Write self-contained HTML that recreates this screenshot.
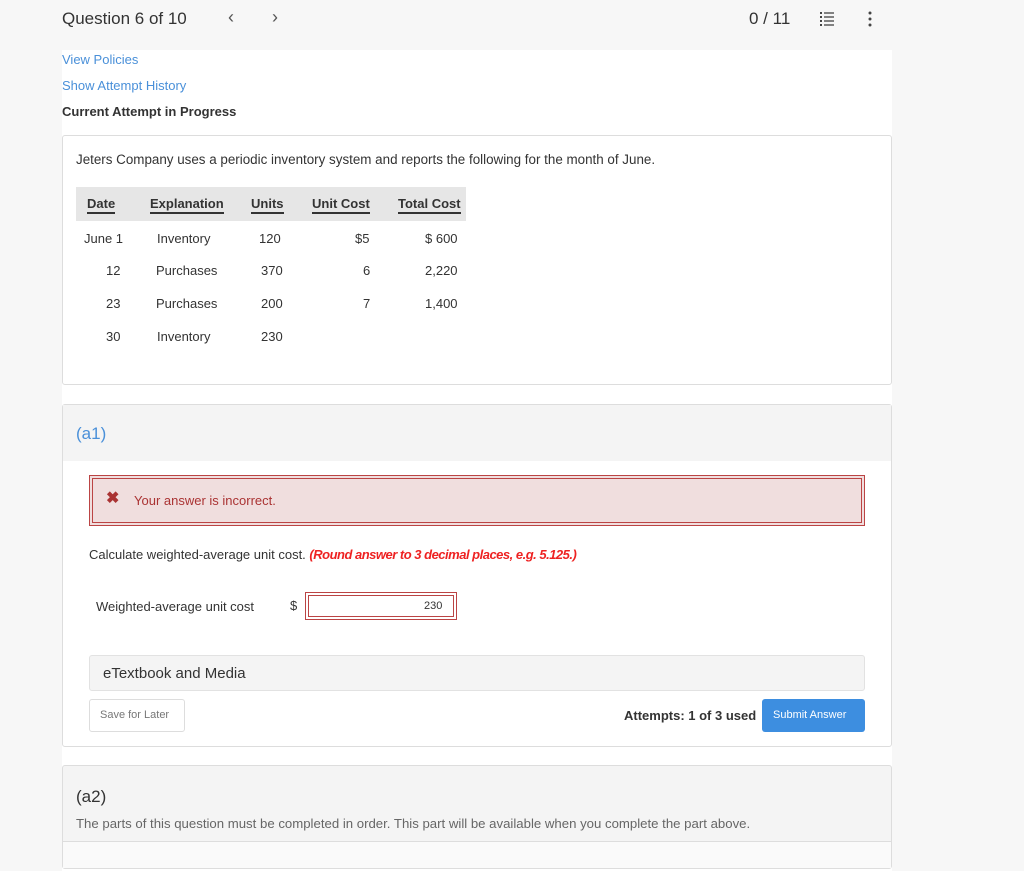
<!DOCTYPE html>
<html><head><meta charset="utf-8"><style>
*{margin:0;padding:0;box-sizing:border-box}
body{width:1024px;height:871px;background:#f7f7f7;font-family:"Liberation Sans",sans-serif;color:#333;position:relative;overflow:hidden}
.a{position:absolute;white-space:nowrap}
.white{position:absolute;left:62px;top:50px;width:830px;height:821px;background:#fff}
.link{color:#4a90d9;font-size:13px}
.box{position:absolute;border:1px solid #ddd;border-radius:3px;background:#fff}
.hdr{position:absolute;left:76px;top:187px;width:390px;height:34px;background:#e6e6e6}
.h{font-weight:bold;font-size:13px;border-bottom:2px solid #333;padding-bottom:1px;color:#333}
.c{font-size:13px;color:#333}
</style></head><body>
<div class="a" style="left:62px;top:9px;font-size:17px;color:#333">Question 6 of 10</div>
<div class="a" style="left:228px;top:7px;font-size:18px;color:#555">&lsaquo;</div>
<div class="a" style="left:272px;top:7px;font-size:18px;color:#555">&rsaquo;</div>
<div class="a" style="left:749px;top:9px;font-size:17px;color:#333">0 / 11</div>
<svg class="a" style="left:819px;top:11px" width="16" height="16" viewBox="0 0 16 16"><g stroke="#444" stroke-width="1.3"><line x1="5" y1="2" x2="15" y2="2"/><line x1="5" y1="6" x2="15" y2="6"/><line x1="5" y1="10" x2="15" y2="10"/><line x1="5" y1="14" x2="15" y2="14"/></g><g fill="#444"><rect x="1" y="1" width="2" height="2"/><rect x="1" y="5" width="2" height="2"/><rect x="1" y="9" width="2" height="2"/><rect x="1" y="13" width="2" height="2"/></g></svg>
<svg class="a" style="left:868px;top:11px" width="4" height="16"><circle cx="2" cy="2" r="1.5" fill="#444"/><circle cx="2" cy="8" r="1.5" fill="#444"/><circle cx="2" cy="14" r="1.5" fill="#444"/></svg>
<div class="white"></div>
<div class="a link" style="left:62px;top:52px">View Policies</div>
<div class="a link" style="left:62px;top:78px">Show Attempt History</div>
<div class="a" style="left:62px;top:104px;font-size:13px;font-weight:bold;color:#333">Current Attempt in Progress</div>

<div class="box" style="left:62px;top:135px;width:830px;height:250px"></div>
<div class="a" style="left:76px;top:152px;font-size:13.4px">Jeters Company uses a periodic inventory system and reports the following for the month of June.</div>
<div class="hdr"></div>
<div class="a h" style="left:87px;top:196px">Date</div>
<div class="a h" style="left:150px;top:196px">Explanation</div>
<div class="a h" style="left:251px;top:196px">Units</div>
<div class="a h" style="left:312px;top:196px">Unit Cost</div>
<div class="a h" style="left:398px;top:196px">Total Cost</div>
<div class="a c" style="left:84px;top:231px">June 1</div>
<div class="a c" style="left:157px;top:231px">Inventory</div>
<div class="a c" style="left:259px;top:231px">120</div>
<div class="a c" style="left:355px;top:231px">$5</div>
<div class="a c" style="left:425px;top:231px">$ 600</div>
<div class="a c" style="left:106px;top:263px">12</div>
<div class="a c" style="left:156px;top:263px">Purchases</div>
<div class="a c" style="left:261px;top:263px">370</div>
<div class="a c" style="left:363px;top:263px">6</div>
<div class="a c" style="left:425px;top:263px">2,220</div>
<div class="a c" style="left:106px;top:296px">23</div>
<div class="a c" style="left:156px;top:296px">Purchases</div>
<div class="a c" style="left:261px;top:296px">200</div>
<div class="a c" style="left:363px;top:296px">7</div>
<div class="a c" style="left:425px;top:296px">1,400</div>
<div class="a c" style="left:106px;top:329px">30</div>
<div class="a c" style="left:157px;top:329px">Inventory</div>
<div class="a c" style="left:261px;top:329px">230</div>

<div class="box" style="left:62px;top:404px;width:830px;height:343px"></div>
<div class="a" style="left:63px;top:405px;width:828px;height:56px;background:#f4f4f4"></div>
<div class="a" style="left:76px;top:424px;font-size:17px;color:#4a90d9">(a1)</div>
<div class="a" style="left:89px;top:475px;width:776px;height:51px;background:#f0dede;border:1px solid #b44;box-shadow:inset 0 0 0 2px #f0dede,inset 0 0 0 3px #b44"></div>
<div class="a" style="left:106px;top:488px;font-size:16px;font-weight:bold;color:#a33">&#10006;</div>
<div class="a" style="left:134px;top:493px;font-size:13px;color:#a33">Your answer is incorrect.</div>
<div class="a" style="left:89px;top:547px;font-size:13px">Calculate weighted-average unit cost. <i style="color:#e22;font-weight:bold;letter-spacing:-0.5px">(Round answer to 3 decimal places, e.g. 5.125.)</i></div>
<div class="a" style="left:96px;top:599px;font-size:13px">Weighted-average unit cost</div>
<div class="a" style="left:290px;top:598px;font-size:13px">$</div>
<div class="a" style="left:305px;top:592px;width:152px;height:28px;border:1px solid #b44;background:#fff;box-shadow:inset 0 0 0 2px #fff,inset 0 0 0 3px #b44"></div>
<div class="a" style="left:424px;top:600px;font-size:11px">230</div>
<div class="a" style="left:89px;top:655px;width:776px;height:36px;background:#f4f4f4;border:1px solid #e2e2e2;border-radius:3px"></div>
<div class="a" style="left:103px;top:665px;font-size:15px">eTextbook and Media</div>
<div class="a" style="left:89px;top:699px;width:96px;height:33px;border:1px solid #ddd;border-radius:3px;background:#fff"></div>
<div class="a" style="left:100px;top:709px;font-size:11px;color:#777">Save for Later</div>
<div class="a" style="left:624px;top:708px;font-size:13px;font-weight:bold">Attempts: 1 of 3 used</div>
<div class="a" style="left:762px;top:699px;width:103px;height:33px;background:#3d8ee0;border-radius:3px"></div>
<div class="a" style="left:773px;top:709px;font-size:11px;color:#fff">Submit Answer</div>

<div class="box" style="left:62px;top:765px;width:830px;height:104px;background:#f4f4f4"></div>
<div class="a" style="left:76px;top:787px;font-size:17px;color:#333">(a2)</div>
<div class="a" style="left:76px;top:816px;font-size:13.2px;color:#666">The parts of this question must be completed in order. This part will be available when you complete the part above.</div>
<div class="a" style="left:63px;top:841px;width:828px;height:27px;background:#fafafa;border-top:1px solid #ddd"></div>
</body></html>
